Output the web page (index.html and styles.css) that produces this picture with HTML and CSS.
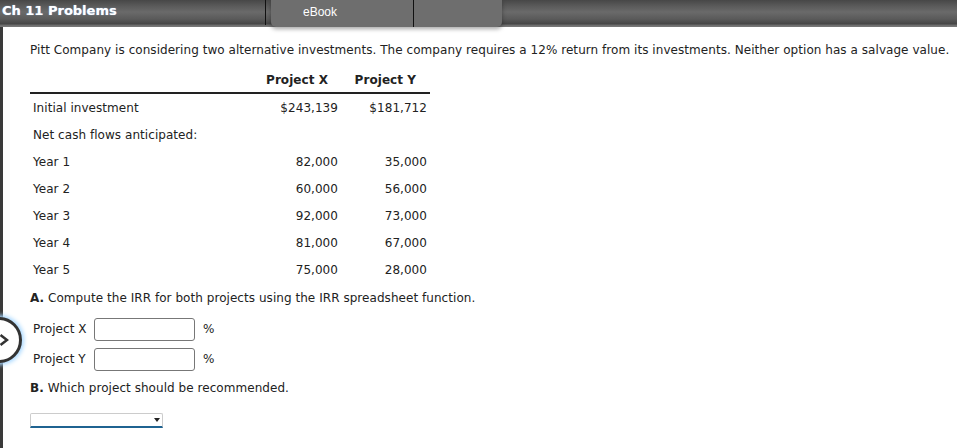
FILE: index.html
```html
<!DOCTYPE html>
<html>
<head>
<meta charset="utf-8">
<link rel="stylesheet" href="styles.css">
</head>
<body>
<header class="topbar">
  <div class="title">Ch 11 Problems</div>
  <div class="sep"></div>
  <div class="tabs">
    <div class="tab tab-ebook">eBook</div>
    <div class="tab tab-blank"></div>
  </div>
</header>
<div class="page">
  <div class="leftrail"></div>
  <div class="nav-circle">
    <svg class="chev" width="10" height="14" viewBox="0 0 10 14"><path d="M1.5 2 L8 7 L1.5 12" fill="none" stroke="#333" stroke-width="2.6"/></svg>
  </div>
  <main class="content">
    <p class="intro">Pitt Company is considering two alternative investments. The company requires a 12% return from its investments. Neither option has a salvage value.</p>
    <div class="table">
      <div class="row head">
        <div class="lbl"></div>
        <div class="num nx">Project X</div>
        <div class="num ny">Project Y</div>
      </div>
      <div class="row"><div class="lbl">Initial investment</div><div class="num nx">$243,139</div><div class="num ny">$181,712</div></div>
      <div class="row"><div class="lbl">Net cash flows anticipated:</div><div class="num nx"></div><div class="num ny"></div></div>
      <div class="row"><div class="lbl">Year 1</div><div class="num nx">82,000</div><div class="num ny">35,000</div></div>
      <div class="row"><div class="lbl">Year 2</div><div class="num nx">60,000</div><div class="num ny">56,000</div></div>
      <div class="row"><div class="lbl">Year 3</div><div class="num nx">92,000</div><div class="num ny">73,000</div></div>
      <div class="row"><div class="lbl">Year 4</div><div class="num nx">81,000</div><div class="num ny">67,000</div></div>
      <div class="row"><div class="lbl">Year 5</div><div class="num nx">75,000</div><div class="num ny">28,000</div></div>
    </div>
    <p class="q qa"><b>A.</b> Compute the IRR for both projects using the IRR spreadsheet function.</p>
    <div class="answers">
      <div class="ans"><span class="alabel">Project X</span><span class="inp"></span><span class="pct">%</span></div>
      <div class="ans"><span class="alabel">Project Y</span><span class="inp"></span><span class="pct">%</span></div>
    </div>
    <p class="q qb"><b>B.</b> Which project should be recommended.</p>
    <div class="select"><span class="caret"></span></div>
  </main>
</div>
</body>
</html>
```
FILE: styles.css
```css
html, body { margin: 0; padding: 0; background: #fff; }
body { font-family: "DejaVu Sans", Verdana, sans-serif; font-size: 12px; color: #222; width: 957px; height: 448px; overflow: hidden; }

.topbar {
  height: 27px;
  display: flex;
  align-items: stretch;
  background: linear-gradient(to bottom, #474747 0px, #5a5a5a 6px, #6a6a6a 12px, #5a5a5a 19px, #454545 24px, #6a6a6a 25px, #7a7a7a 27px);
}
.title {
  width: 263px;
  padding-left: 2px;
  color: #fff;
  font-weight: bold;
  font-size: 13px;
  line-height: 22px;
  text-shadow: 0 0 1px #9cc7ff;
}
.sep { width: 1px; background: #111; height: 25px; }
.tabs {
  margin-left: 5px;
  width: 231px;
  height: 27px;
  display: flex;
  background: #6e6e6e;
  border-radius: 0 0 5px 5px;
  box-shadow: 0 2px 4px rgba(0,0,0,0.35);
  position: relative;
  z-index: 1;
}
.tab-ebook {
  width: 143px;
  border-right: 1px solid #111;
  height: 27px;
  box-sizing: border-box;
  color: #fff;
  font-family: "Liberation Sans", Arial, sans-serif;
  font-size: 12px;
  line-height: 24px;
  padding-left: 32px;
}
.tab-blank { flex: 1; }

.page { position: relative; display: flex; height: 421px; }
.leftrail { width: 3px; background: #3a3a3a; flex: none; }
.nav-circle {
  position: absolute;
  left: -24px;
  top: 290px;
  width: 40px;
  height: 40px;
  border: 3px solid #333;
  border-radius: 50%;
  background: #fff;
  box-shadow: 0 0 4px 2px #a8d8ff;
  z-index: 2;
}
.chev { position: absolute; left: 20px; top: 13px; }
.content { padding-left: 27px; flex: 1; letter-spacing: 0.05px; }
.intro { margin: 0; padding-top: 15px; line-height: 16px; }

.table { width: 400px; margin-top: 14px; }
.row { display: flex; height: 27px; align-items: center; }
.row.head { height: 20px; align-items: flex-start; border-bottom: 2px solid #222; font-weight: bold; line-height: 16px; }
.lbl { flex: 1; padding-left: 3px; }
.num { text-align: right; box-sizing: border-box; }
.nx { width: 80px; padding-right: 3px; }
.ny { width: 89px; padding-right: 3px; }
.row.head .nx { padding-right: 13px; }
.row.head .ny { padding-right: 14px; }

.q { margin: 0; line-height: 16px; }
.qa { margin-top: 7px; }
.answers { margin-top: 8px; }
.ans { display: flex; align-items: center; height: 30px; padding-left: 3px; }
.alabel { width: 61px; }
.inp { border: 1px solid #777; border-radius: 3px; box-sizing: border-box; width: 101px; height: 23px; }
.pct { margin-left: 8px; }
.qb { margin-top: 6px; }
.select {
  margin-top: 17px;
  width: 133px;
  height: 15px;
  border: 1px solid #ccc;
  border-bottom: 2px solid #1f6391;
  border-radius: 2px 2px 0 0;
  box-sizing: border-box;
  position: relative;
}
.caret { position: absolute; right: 2px; top: 4px; width: 0; height: 0; border-left: 3px solid transparent; border-right: 3px solid transparent; border-top: 4px solid #222; }
```
